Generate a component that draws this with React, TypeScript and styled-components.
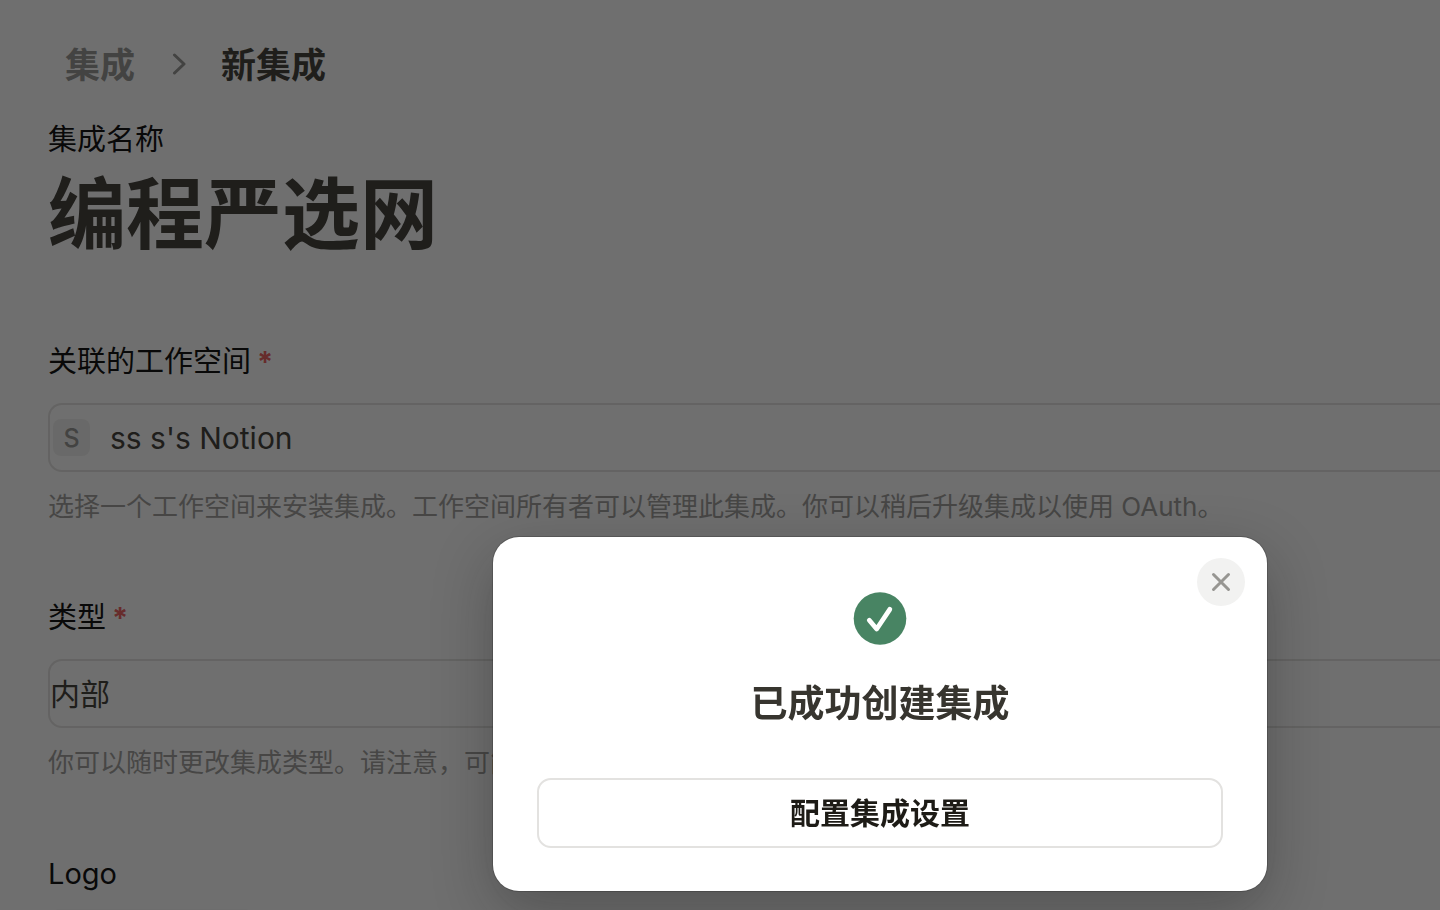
import React from "react";
import styled, { createGlobalStyle } from "styled-components";

const GlobalStyle = createGlobalStyle`
  *, *::before, *::after { box-sizing: border-box; }
  body {
    margin: 0;
    background: #ffffff;
    color: #000000;
    font-family: Inter, "Noto Sans CJK SC", sans-serif;
    overflow: hidden;
  }
  button, input, select { font-family: inherit; color: inherit; }
`;

const Page = styled.main`
  height: 100vh;
  overflow: hidden;
  padding: 40px 0 0 48px;
`;

const Breadcrumb = styled.nav`
  display: flex;
  align-items: center;
  padding-left: 17px;
  font-size: 35px;
  line-height: 50px;
  font-weight: 700;
  color: #37352f;
`;

const CrumbLink = styled.a`
  color: #91918e;
  text-decoration: none;
`;

const Chevron = styled.svg`
  width: 24px;
  height: 24px;
  margin: 0 31px;
  fill: none;
  stroke: #91918e;
  stroke-width: 3;
  stroke-linecap: round;
  stroke-linejoin: round;
`;

const NameField = styled.div`
  display: flex;
  flex-direction: column;
  gap: 5px;
  margin: 31px 0 89px;
`;

const Label = styled.label`
  display: flex;
  align-items: center;
  font-size: 29px;
  line-height: 38px;
`;

const NameInput = styled.input`
  width: 100%;
  height: 90px;
  padding: 0;
  border: 0;
  outline: 0;
  background: none;
  color: #37352f;
  font-size: 78px;
  font-weight: 700;
`;

const Form = styled.div`
  display: flex;
  flex-direction: column;
  gap: 74px;
`;

const Field = styled.div`
  display: flex;
  flex-direction: column;
`;

const Required = styled.span`
  margin-left: 6px;
  color: #eb5757;
  font-weight: 700;
`;

const SelectBox = styled.div`
  display: flex;
  align-items: center;
  height: 69px;
  margin: 22px 0 17px;
  border: 2px solid #e3e2e0;
  border-right: 0;
  border-radius: 14px 0 0 14px;
  color: #37352f;
`;

const Avatar = styled.span`
  display: grid;
  place-items: center;
  width: 37px;
  height: 37px;
  margin: 0 20px 0 3px;
  border-radius: 8px;
  background: #f1f1ef;
  color: #91918e;
  font-size: 25px;
  font-weight: 500;
`;

const Select = styled.select`
  flex: 1;
  height: 100%;
  padding: 0;
  border: 0;
  outline: 0;
  appearance: none;
  background: none;
  font-size: 30px;
`;

const Help = styled.p`
  margin: 0;
  color: #9b9a97;
  font-size: 26px;
  line-height: 36px;
  white-space: nowrap;
`;

const LogoBox = styled.div`
  width: 208px;
  height: 208px;
  margin-top: 16px;
  border-radius: 12px;
  background: #fafafa;
`;

const Overlay = styled.div`
  position: fixed;
  inset: 0;
  display: flex;
  align-items: flex-end;
  justify-content: center;
  padding: 0 0 19px 320px;
  background: rgba(15, 15, 15, 0.6);
`;

const Dialog = styled.section`
  position: relative;
  display: flex;
  flex-direction: column;
  align-items: center;
  width: 774px;
  padding: 55px 44px 43px;
  border-radius: 26px;
  background: #ffffff;
  box-shadow: 0 0 0 1px rgba(15, 15, 15, 0.2), 0 20px 60px rgba(15, 15, 15, 0.3);
`;

const CloseButton = styled.button`
  position: absolute;
  top: 21px;
  right: 22px;
  display: grid;
  place-items: center;
  width: 48px;
  height: 48px;
  padding: 0;
  border: 0;
  border-radius: 50%;
  background: #f2f2f1;
  cursor: pointer;

  svg {
    width: 20px;
    height: 20px;
    fill: none;
    stroke: #979692;
    stroke-width: 3;
    stroke-linecap: round;
  }
`;

const SuccessIcon = styled.svg`
  width: 54px;
  height: 54px;
`;

const DialogTitle = styled.h2`
  margin: 34px 0 50px;
  color: #37352f;
  font-size: 37px;
  line-height: 48px;
  font-weight: 700;
`;

const ConfigureButton = styled.button`
  width: 100%;
  height: 70px;
  padding: 0 0 4px;
  border: 2px solid #e3e2e0;
  border-radius: 14px;
  background: #ffffff;
  color: #1d1b16;
  font-size: 30px;
  font-weight: 600;
  cursor: pointer;
`;

export default function App() {
  return (
    <>
      <GlobalStyle />
      <Page>
        <Breadcrumb aria-label="面包屑">
          <CrumbLink href="#">集成</CrumbLink>
          <Chevron viewBox="0 0 24 24" aria-hidden="true">
            <path d="M8.500 2l9.500 9-9.500 9" />
          </Chevron>
          <span aria-current="page">新集成</span>
        </Breadcrumb>

        <NameField>
          <Label htmlFor="name">集成名称</Label>
          <NameInput id="name" defaultValue="编程严选网" />
        </NameField>

        <Form>
          <Field>
            <Label htmlFor="workspace">
              关联的工作空间<Required>*</Required>
            </Label>
            <SelectBox>
              <Avatar aria-hidden="true">S</Avatar>
              <Select id="workspace">
                <option>ss s's Notion</option>
              </Select>
            </SelectBox>
            <Help>选择一个工作空间来安装集成。工作空间所有者可以管理此集成。你可以稍后升级集成以使用 OAuth。</Help>
          </Field>

          <Field>
            <Label htmlFor="type">
              类型<Required>*</Required>
            </Label>
            <SelectBox>
              <Select id="type">
                <option>内部</option>
              </Select>
            </SelectBox>
            <Help>你可以随时更改集成类型。请注意，可能</Help>
          </Field>

          <Field>
            <Label as="span">Logo</Label>
            <LogoBox />
          </Field>
        </Form>
      </Page>

      <Overlay>
        <Dialog role="dialog" aria-modal="true" aria-labelledby="dialog-title">
          <CloseButton type="button" aria-label="关闭">
            <svg viewBox="0 0 20 20" aria-hidden="true">
              <path d="M2.500 2.500l15 15M17.500 2.500l-15 15" />
            </svg>
          </CloseButton>
          <SuccessIcon viewBox="0 0 54 54" aria-hidden="true">
            <circle cx="27" cy="26.500" r="26.300" fill="#488463" />
            <path
              d="M16.300 28.300L23.700 37L36.800 17.300"
              fill="none"
              stroke="#ffffff"
              strokeWidth="4.800"
              strokeLinecap="round"
              strokeLinejoin="round"
            />
          </SuccessIcon>
          <DialogTitle id="dialog-title">已成功创建集成</DialogTitle>
          <ConfigureButton type="button">配置集成设置</ConfigureButton>
        </Dialog>
      </Overlay>
    </>
  );
}
